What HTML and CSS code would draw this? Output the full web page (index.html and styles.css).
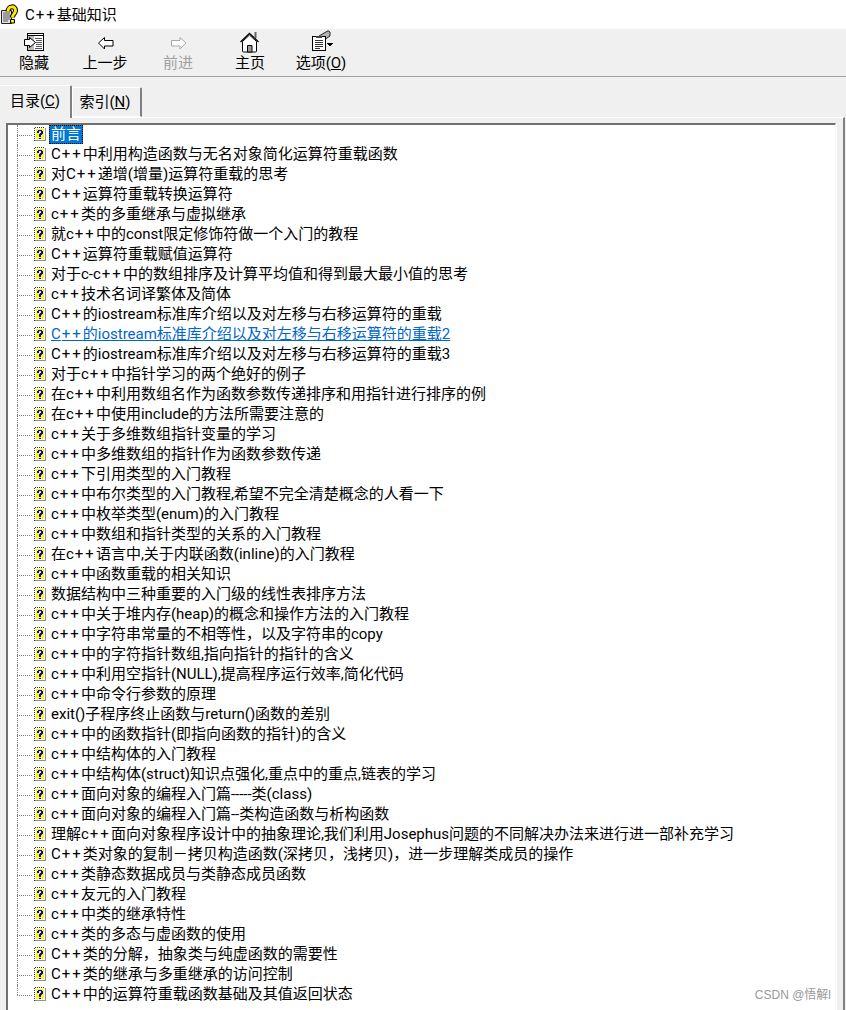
FILE: index.html
```html
<!DOCTYPE html>
<html lang="zh">
<head>
<meta charset="utf-8">
<title>C++基础知识</title>
<link rel="stylesheet" href="styles.css">
</head>
<body>
<svg class="defs" width="0" height="0">
  <symbol id="topic" viewBox="0 0 16 16" shape-rendering="crispEdges">
    <path d="M1 0h11v13H1z" fill="#fff"/>
    <path d="M3 2h8v10H3z" fill="#ffff00"/>
    <path d="M1.500 .5h10.500M1.500 .5v13h10.500" fill="none" stroke="#333" stroke-dasharray="1 1"/>
    <path d="M12 1h1v13H2v-1h10z" fill="#909090"/>
    <path d="M5 3h4v1h1v3H9v1H8v2H6V7h1V6h1V4H6v2H4V4h1zM6 11h2v1H6z" fill="#0000ff"/>
  </symbol>
</svg>
<header class="titlebar">
  <svg class="app-icon" viewBox="0 0 20 24" width="20" height="24">
    <path d="M1.500 6.500h10v13h-10z" fill="#e4e4e4" stroke="#222"/>
    <path d="M3 9h7M3 11h7M3 13h7M3 15h7M3 17h5" stroke="#555"/>
    <path d="M8 7.500C8 1.500 15.500 1.500 15.500 6.500 15.500 10 12.500 9.500 12.500 13.500" fill="none" stroke="#000" stroke-width="5"/>
    <path d="M8 7.500C8 1.500 15.500 1.500 15.500 6.500 15.500 10 12.500 9.500 12.500 13.500" fill="none" stroke="#ffe800" stroke-width="3"/>
    <path d="M10.500 15.500h4v3.500h-4z" fill="#ffe800" stroke="#000"/>
  </svg>
  <span class="title-text">C<span class="pp">++</span>基础知识</span>
</header>
<nav class="toolbar">
  <div class="tool tool-hide">
    <svg class="tool-icon" viewBox="0 0 24 24" shape-rendering="crispEdges">
      <path d="M5.500 3.500h16v17h-16z" fill="#fff" stroke="#000"/>
      <path d="M6 6h6v14H6z" fill="#bdbdbd"/>
      <path d="M5.500 5.500h16" stroke="#000"/>
      <path d="M13 8h7M14 10h6M14 12h6M14 14h6M14 16h6M13 18h7" stroke="#555"/>
      <path d="M2.500 9.500h5v-2l6 5-6 5v-2h-5z" fill="#fff" stroke="#000" shape-rendering="auto"/>
    </svg>
    <span>隐藏</span>
  </div>
  <div class="tool tool-back">
    <svg class="tool-icon" viewBox="0 0 24 24">
      <path d="M5.500 13 11.500 7.500v3h8.500v5.500h-8.500v3z" fill="#fff" stroke="#000"/>
    </svg>
    <span>上一步</span>
  </div>
  <div class="tool tool-forward is-disabled">
    <svg class="tool-icon" viewBox="0 0 24 24">
      <path d="M20 13 14 7.500v3H5.500v5.500H14v3z" fill="#fff" stroke="#a8a8a8"/>
    </svg>
    <span>前进</span>
  </div>
  <div class="tool tool-home">
    <svg class="tool-icon" viewBox="0 0 24 24">
      <path d="M2.500 12 11.500 3.500l5 4.500M20.500 12l-4-4" fill="none" stroke="#000" stroke-width="1.300"/>
      <path d="M4.500 11.500 11.500 5l7 6.500v9.500a1 1 0 0 1-1 1h-12a1 1 0 0 1-1-1z" fill="#fff" stroke="#000"/>
      <path d="M16.500 2h2v6h-2z" fill="#666"/>
      <path d="M9.500 22v-6.500h4.500v6.500z" fill="#9a9a9a" stroke="#000"/>
    </svg>
    <span>主页</span>
  </div>
  <div class="tool tool-options">
    <svg class="tool-icon" viewBox="0 0 24 24">
      <path d="M10 6 19 0.800l2 1.200v4l-6 4h-5z" fill="#b4b4b4" stroke="#222"/>
      <g shape-rendering="crispEdges">
        <path d="M3.500 6.500h13v14h-13z" fill="#fff" stroke="#000" stroke-width="1.500"/>
        <path d="M7 6h6v2H7z" fill="#444"/>
        <path d="M6 10h8M6 12h8M6 14h8M6 16h8M6 18h5" stroke="#333"/>
        <path d="M18 13h6v1h-1v1h-1v1h-2v-1h-1v-1h-1z" fill="#000"/>
      </g>
    </svg>
    <span>选项(<u>O</u>)</span>
  </div>
</nav>
<main class="pane">
  <div class="tabs">
    <div class="tab is-active">目录(<u>C</u>)</div>
    <div class="tab">索引(<u>N</u>)</div>
  </div>
  <section class="panel">
    <ul class="tree">
      <li class="node"><svg class="ico"><use href="#topic"/></svg><span class="label is-selected">前言</span></li>
      <li class="node"><svg class="ico"><use href="#topic"/></svg><span class="label">C<span class="pp">++</span>中利用构造函数与无名对象简化运算符重载函数</span></li>
      <li class="node"><svg class="ico"><use href="#topic"/></svg><span class="label">对C<span class="pp">++</span>递增(增量)运算符重载的思考</span></li>
      <li class="node"><svg class="ico"><use href="#topic"/></svg><span class="label">C<span class="pp">++</span>运算符重载转换运算符</span></li>
      <li class="node"><svg class="ico"><use href="#topic"/></svg><span class="label">c<span class="pp">++</span>类的多重继承与虚拟继承</span></li>
      <li class="node"><svg class="ico"><use href="#topic"/></svg><span class="label">就c<span class="pp">++</span>中的const限定修饰符做一个入门的教程</span></li>
      <li class="node"><svg class="ico"><use href="#topic"/></svg><span class="label">C<span class="pp">++</span>运算符重载赋值运算符</span></li>
      <li class="node"><svg class="ico"><use href="#topic"/></svg><span class="label">对于c-c<span class="pp">++</span>中的数组排序及计算平均值和得到最大最小值的思考</span></li>
      <li class="node"><svg class="ico"><use href="#topic"/></svg><span class="label">c<span class="pp">++</span>技术名词译繁体及简体</span></li>
      <li class="node"><svg class="ico"><use href="#topic"/></svg><span class="label">C<span class="pp">++</span>的iostream标准库介绍以及对左移与右移运算符的重载</span></li>
      <li class="node"><svg class="ico"><use href="#topic"/></svg><span class="label is-link">C<span class="pp">++</span>的iostream标准库介绍以及对左移与右移运算符的重载2</span></li>
      <li class="node"><svg class="ico"><use href="#topic"/></svg><span class="label">C<span class="pp">++</span>的iostream标准库介绍以及对左移与右移运算符的重载3</span></li>
      <li class="node"><svg class="ico"><use href="#topic"/></svg><span class="label">对于c<span class="pp">++</span>中指针学习的两个绝好的例子</span></li>
      <li class="node"><svg class="ico"><use href="#topic"/></svg><span class="label">在c<span class="pp">++</span>中利用数组名作为函数参数传递排序和用指针进行排序的例</span></li>
      <li class="node"><svg class="ico"><use href="#topic"/></svg><span class="label">在c<span class="pp">++</span>中使用include的方法所需要注意的</span></li>
      <li class="node"><svg class="ico"><use href="#topic"/></svg><span class="label">c<span class="pp">++</span>关于多维数组指针变量的学习</span></li>
      <li class="node"><svg class="ico"><use href="#topic"/></svg><span class="label">c<span class="pp">++</span>中多维数组的指针作为函数参数传递</span></li>
      <li class="node"><svg class="ico"><use href="#topic"/></svg><span class="label">c<span class="pp">++</span>下引用类型的入门教程</span></li>
      <li class="node"><svg class="ico"><use href="#topic"/></svg><span class="label">c<span class="pp">++</span>中布尔类型的入门教程,希望不完全清楚概念的人看一下</span></li>
      <li class="node"><svg class="ico"><use href="#topic"/></svg><span class="label">c<span class="pp">++</span>中枚举类型(enum)的入门教程</span></li>
      <li class="node"><svg class="ico"><use href="#topic"/></svg><span class="label">c<span class="pp">++</span>中数组和指针类型的关系的入门教程</span></li>
      <li class="node"><svg class="ico"><use href="#topic"/></svg><span class="label">在c<span class="pp">++</span>语言中,关于内联函数(inline)的入门教程</span></li>
      <li class="node"><svg class="ico"><use href="#topic"/></svg><span class="label">c<span class="pp">++</span>中函数重载的相关知识</span></li>
      <li class="node"><svg class="ico"><use href="#topic"/></svg><span class="label">数据结构中三种重要的入门级的线性表排序方法</span></li>
      <li class="node"><svg class="ico"><use href="#topic"/></svg><span class="label">c<span class="pp">++</span>中关于堆内存(heap)的概念和操作方法的入门教程</span></li>
      <li class="node"><svg class="ico"><use href="#topic"/></svg><span class="label">c<span class="pp">++</span>中字符串常量的不相等性，以及字符串的copy</span></li>
      <li class="node"><svg class="ico"><use href="#topic"/></svg><span class="label">c<span class="pp">++</span>中的字符指针数组,指向指针的指针的含义</span></li>
      <li class="node"><svg class="ico"><use href="#topic"/></svg><span class="label">c<span class="pp">++</span>中利用空指针(NULL),提高程序运行效率,简化代码</span></li>
      <li class="node"><svg class="ico"><use href="#topic"/></svg><span class="label">c<span class="pp">++</span>中命令行参数的原理</span></li>
      <li class="node"><svg class="ico"><use href="#topic"/></svg><span class="label">exit()子程序终止函数与return()函数的差别</span></li>
      <li class="node"><svg class="ico"><use href="#topic"/></svg><span class="label">c<span class="pp">++</span>中的函数指针(即指向函数的指针)的含义</span></li>
      <li class="node"><svg class="ico"><use href="#topic"/></svg><span class="label">c<span class="pp">++</span>中结构体的入门教程</span></li>
      <li class="node"><svg class="ico"><use href="#topic"/></svg><span class="label">c<span class="pp">++</span>中结构体(struct)知识点强化,重点中的重点,链表的学习</span></li>
      <li class="node"><svg class="ico"><use href="#topic"/></svg><span class="label">c<span class="pp">++</span>面向对象的编程入门篇-----类(class)</span></li>
      <li class="node"><svg class="ico"><use href="#topic"/></svg><span class="label">c<span class="pp">++</span>面向对象的编程入门篇--类构造函数与析构函数</span></li>
      <li class="node"><svg class="ico"><use href="#topic"/></svg><span class="label">理解c<span class="pp">++</span>面向对象程序设计中的抽象理论,我们利用Josephus问题的不同解决办法来进行进一部补充学习</span></li>
      <li class="node"><svg class="ico"><use href="#topic"/></svg><span class="label">C<span class="pp">++</span>类对象的复制－拷贝构造函数(深拷贝，浅拷贝)，进一步理解类成员的操作</span></li>
      <li class="node"><svg class="ico"><use href="#topic"/></svg><span class="label">c<span class="pp">++</span>类静态数据成员与类静态成员函数</span></li>
      <li class="node"><svg class="ico"><use href="#topic"/></svg><span class="label">c<span class="pp">++</span>友元的入门教程</span></li>
      <li class="node"><svg class="ico"><use href="#topic"/></svg><span class="label">c<span class="pp">++</span>中类的继承特性</span></li>
      <li class="node"><svg class="ico"><use href="#topic"/></svg><span class="label">c<span class="pp">++</span>类的多态与虚函数的使用</span></li>
      <li class="node"><svg class="ico"><use href="#topic"/></svg><span class="label">C<span class="pp">++</span>类的分解，抽象类与纯虚函数的需要性</span></li>
      <li class="node"><svg class="ico"><use href="#topic"/></svg><span class="label">C<span class="pp">++</span>类的继承与多重继承的访问控制</span></li>
      <li class="node"><svg class="ico"><use href="#topic"/></svg><span class="label">C<span class="pp">++</span>中的运算符重载函数基础及其值返回状态</span></li>
    </ul>
    <div class="watermark">CSDN @悟解l</div>
  </section>
</main>
</body>
</html>
```

FILE: styles.css
```css
* { box-sizing: border-box; }
html, body { margin: 0; height: 100%; }
body {
  width: 846px;
  height: 1010px;
  overflow: hidden;
  background: #f0f0f0;
  color: #000;
  font: 15px/20px Roboto, "Noto Sans CJK SC", sans-serif;
  display: flex;
  flex-direction: column;
}
.defs { position: absolute; }
.pp { letter-spacing: 2px; padding-left: 1px; }
.titlebar {
  height: 29px;
  background: #fff;
  display: flex;
  align-items: center;
  gap: 5px;
}
.app-icon { flex: none; margin-top: 3px; }
.toolbar {
  height: 48px;
  display: flex;
  align-items: flex-start;
  border-bottom: 1px solid #a0a0a0;
  padding-top: 1px;
}
.tool {
  display: flex;
  flex-direction: column;
  align-items: center;
}
.tool-icon { display: block; width: 24px; height: 24px; margin-bottom: -1px; }
.tool-hide { width: 68px; }
.tool-back { width: 74px; }
.tool-forward { width: 72px; }
.tool-home { width: 72px; }
.tool-options { width: 70px; }
.is-disabled { color: #a0a0a0; }
.pane {
  flex: 1;
  display: flex;
  flex-direction: column;
  min-height: 0;
  padding-top: 8px;
}
.tabs {
  display: flex;
  align-items: flex-end;
  height: 32px;
  position: relative;
}
.tab {
  width: 70px;
  height: 30px;
  padding: 4px 3px 0 0;
  text-align: center;
  background: #f0f0f0;
  border: 1px solid #fff;
  border-right: 2px solid #808080;
  border-bottom: 1px solid #fff;
  border-radius: 2px 2px 0 0;
}
.tab.is-active {
  width: 72px;
  height: 33px;
  padding: 5px 0 0;
  border-left: 0;
  border-bottom: 0;
  margin-bottom: -1px;
  position: relative;
  z-index: 1;
}
.panel {
  flex: 1;
  min-height: 0;
  margin: 0 1px 0 0;
  padding: 5px 7px 0 6px;
  border-top: 1px solid #fff;
  border-right: 2px solid #808080;
  position: relative;
}
.tree {
  list-style: none;
  margin: 0;
  height: 100%;
  padding: 0 0 0 2px;
  background: #fff;
  border-top: 2px solid #707070;
  border-left: 2px solid #707070;
  border-right: 1px solid #f8f8f8;
  overflow: hidden;
  box-shadow: 1px 0 0 #fff;
}
.node {
  height: 20px;
  display: flex;
  align-items: flex-start;
  padding-left: 23px;
  padding-top: 2px;
  position: relative;
  white-space: nowrap;
}
.node::before {
  content: "";
  position: absolute;
  left: 7px;
  top: 0;
  bottom: 0;
  border-left: 1px dotted #808080;
}
.node::after {
  content: "";
  position: absolute;
  left: 7px;
  top: 10px;
  width: 15px;
  border-top: 1px dotted #808080;
}
.node:last-child::before { bottom: 10px; }
.ico { width: 16px; height: 16px; flex: none; }
.label { margin-top: -2px; padding: 0 2px; line-height: 19px; }
.label.is-selected {
  background: #0078d7;
  color: #fff;
  outline: 1px dotted #000;
  outline-offset: -1px;
}
.label.is-link { color: #0066cc; text-decoration: underline; }
.watermark {
  position: absolute;
  right: 12px;
  bottom: 8px;
  font: 12px/14px "Liberation Sans", "Noto Sans CJK SC", sans-serif;
  color: #999;
}
```
